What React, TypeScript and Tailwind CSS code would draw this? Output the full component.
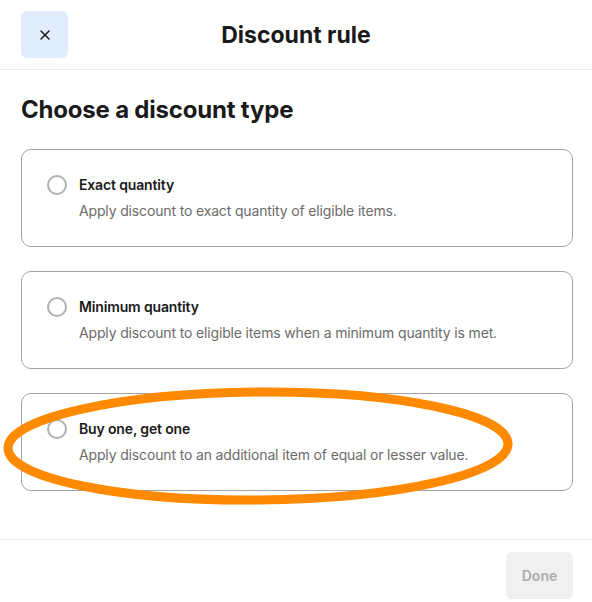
import { X } from 'lucide-react'

const options = [
  { title: 'Exact quantity', desc: 'Apply discount to exact quantity of eligible items.' },
  { title: 'Minimum quantity', desc: 'Apply discount to eligible items when a minimum quantity is met.' },
  { title: 'Buy one, get one', desc: 'Apply discount to an additional item of equal or lesser value.' },
]

export default function App() {
  return (
    <div className="relative w-[592px] h-[602px] bg-white text-[#1a1a1a] overflow-hidden" style={{ fontFamily: 'Inter, "Liberation Sans", sans-serif' }}>
      <div className="relative flex items-center h-[70px] px-[21px] border-b border-[#ebebeb]">
        <button className="w-[47px] h-[47px] rounded-[6px] bg-[#e1ecfd] flex items-center justify-center">
          <X size={16} strokeWidth={2.2} className="text-[#1a1a1a]" />
        </button>
        <h1 className="absolute left-0 right-0 top-[21px] text-center text-[23px] leading-[28px] font-bold pointer-events-none">Discount rule</h1>
      </div>

      <div className="px-[21px] pt-[25px]">
        <h2 className="text-[24px] font-bold leading-[30px] tracking-[-0.2px]">Choose a discount type</h2>
        <div className="mt-[24px] flex flex-col gap-[24px] w-[552px]">
          {options.map((o) => (
            <div key={o.title} className="h-[98px] rounded-[10px] border border-[#a3a3a3] flex items-start pl-[25px] pt-[25px]">
              <div className="w-[20px] h-[20px] rounded-full border-2 border-[#b0b0b0] shrink-0" />
              <div className="ml-[12px]">
                <div className="text-[14px] font-semibold leading-[20px] tracking-[-0.15px]">{o.title}</div>
                <div className="text-[14px] text-[#6b6b6b] leading-[20px] mt-[6px] tracking-[-0.15px]">{o.desc}</div>
              </div>
            </div>
          ))}
        </div>
      </div>

      <div className="absolute left-0 right-0 bottom-0 h-[63px] border-t border-[#ebebeb] flex items-start justify-end pr-[19px] pt-[12px]">
        <button className="w-[67px] h-[47px] rounded-[6px] bg-[#f0f0f0] text-[#ababab] text-[14px] font-semibold">Done</button>
      </div>

      <svg className="absolute left-0 top-0 pointer-events-none" width="592" height="602">
        <ellipse cx="258" cy="446" rx="250" ry="54" fill="none" stroke="#ff8a00" strokeWidth="9" transform="rotate(-0.5 258 446)" />
      </svg>
    </div>
  )
}
